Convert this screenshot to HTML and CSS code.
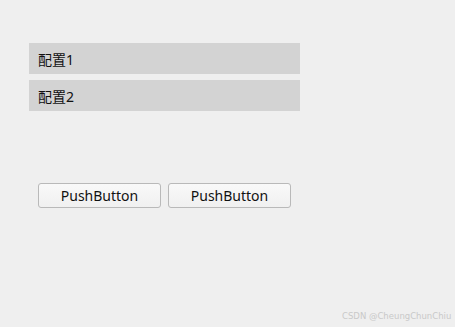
FILE: index.html
```html
<!DOCTYPE html>
<html>
<head>
<meta charset="utf-8">
<link rel="stylesheet" href="styles.css">
</head>
<body>
<div class="window">
  <div class="list">
    <div class="item">配置1</div>
    <div class="item">配置2</div>
  </div>
  <div class="buttons">
    <button class="btn">PushButton</button>
    <button class="btn">PushButton</button>
  </div>
  <div class="watermark">CSDN @CheungChunChiu</div>
</div>
</body>
</html>
```
FILE: styles.css
```css
html, body {
  margin: 0;
  padding: 0;
  background: #efefef;
}
.window {
  position: relative;
  width: 455px;
  height: 327px;
  overflow: hidden;
  font-family: "Noto Sans", "Noto Sans CJK SC", sans-serif;
  color: #111;
}
.list {
  display: flex;
  flex-direction: column;
  gap: 6px;
  padding: 43px 0 0 29px;
  width: 271px;
}
.item {
  height: 31px;
  background: #d3d3d3;
  display: flex;
  align-items: center;
  padding-left: 9px;
  font-size: 14px;
}
.buttons {
  display: flex;
  gap: 7px;
  padding: 72px 0 0 38px;
}
.btn {
  width: 123px;
  height: 25px;
  margin: 0;
  padding: 0;
  border: 1px solid #b9b9b9;
  border-radius: 3px;
  background: linear-gradient(#f9f9f9, #f0f0f0);
  font-family: "Noto Sans", sans-serif;
  font-size: 14px;
  color: #111;
}
.watermark {
  position: absolute;
  right: 3px;
  bottom: 6px;
  font-family: "DejaVu Sans", sans-serif;
  font-size: 8.5px;
  color: #c9c9c9;
  white-space: nowrap;
  width: 110px;
  overflow: hidden;
}
```
